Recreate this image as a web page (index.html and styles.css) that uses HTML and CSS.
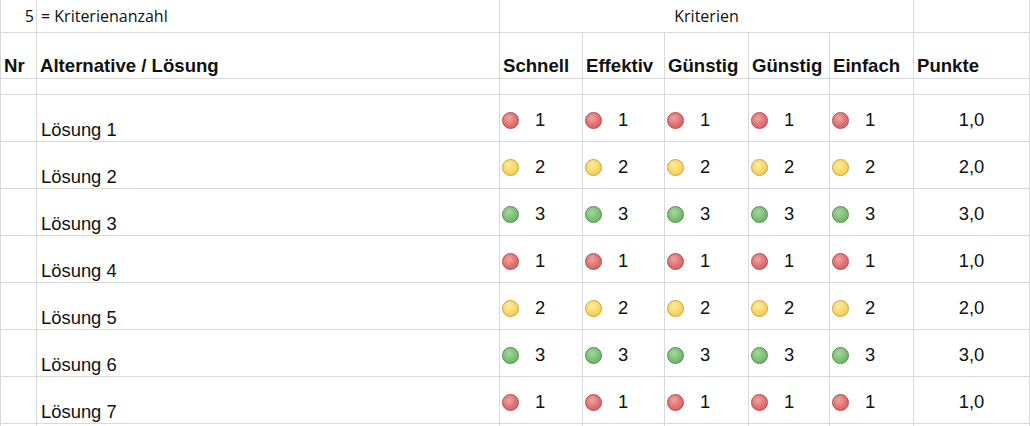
FILE: index.html
```html
<!DOCTYPE html>
<html lang="de">
<head>
<meta charset="utf-8">
<title>Kriterien</title>
<link rel="stylesheet" href="styles.css">
</head>
<body>
<div class="sheet">
  <div class="cell top num-right">5</div>
  <div class="cell top">= Kriterienanzahl</div>
  <div class="cell top center span5">Kriterien</div>
  <div class="cell top"></div>

  <div class="cell head">Nr</div>
  <div class="cell head">Alternative / Lösung</div>
  <div class="cell head">Schnell</div>
  <div class="cell head">Effektiv</div>
  <div class="cell head">Günstig</div>
  <div class="cell head">Günstig</div>
  <div class="cell head">Einfach</div>
  <div class="cell head">Punkte</div>

  <div class="cell gap"></div><div class="cell gap"></div><div class="cell gap"></div><div class="cell gap"></div>
  <div class="cell gap"></div><div class="cell gap"></div><div class="cell gap"></div><div class="cell gap"></div>

  <div class="cell data"></div>
  <div class="cell data name">Lösung 1</div>
  <div class="cell data crit"><span class="dot red"></span><span class="val">1</span></div>
  <div class="cell data crit"><span class="dot red"></span><span class="val">1</span></div>
  <div class="cell data crit"><span class="dot red"></span><span class="val">1</span></div>
  <div class="cell data crit"><span class="dot red"></span><span class="val">1</span></div>
  <div class="cell data crit"><span class="dot red"></span><span class="val">1</span></div>
  <div class="cell data pts">1,0</div>

  <div class="cell data"></div>
  <div class="cell data name">Lösung 2</div>
  <div class="cell data crit"><span class="dot yellow"></span><span class="val">2</span></div>
  <div class="cell data crit"><span class="dot yellow"></span><span class="val">2</span></div>
  <div class="cell data crit"><span class="dot yellow"></span><span class="val">2</span></div>
  <div class="cell data crit"><span class="dot yellow"></span><span class="val">2</span></div>
  <div class="cell data crit"><span class="dot yellow"></span><span class="val">2</span></div>
  <div class="cell data pts">2,0</div>

  <div class="cell data"></div>
  <div class="cell data name">Lösung 3</div>
  <div class="cell data crit"><span class="dot green"></span><span class="val">3</span></div>
  <div class="cell data crit"><span class="dot green"></span><span class="val">3</span></div>
  <div class="cell data crit"><span class="dot green"></span><span class="val">3</span></div>
  <div class="cell data crit"><span class="dot green"></span><span class="val">3</span></div>
  <div class="cell data crit"><span class="dot green"></span><span class="val">3</span></div>
  <div class="cell data pts">3,0</div>

  <div class="cell data"></div>
  <div class="cell data name">Lösung 4</div>
  <div class="cell data crit"><span class="dot red"></span><span class="val">1</span></div>
  <div class="cell data crit"><span class="dot red"></span><span class="val">1</span></div>
  <div class="cell data crit"><span class="dot red"></span><span class="val">1</span></div>
  <div class="cell data crit"><span class="dot red"></span><span class="val">1</span></div>
  <div class="cell data crit"><span class="dot red"></span><span class="val">1</span></div>
  <div class="cell data pts">1,0</div>

  <div class="cell data"></div>
  <div class="cell data name">Lösung 5</div>
  <div class="cell data crit"><span class="dot yellow"></span><span class="val">2</span></div>
  <div class="cell data crit"><span class="dot yellow"></span><span class="val">2</span></div>
  <div class="cell data crit"><span class="dot yellow"></span><span class="val">2</span></div>
  <div class="cell data crit"><span class="dot yellow"></span><span class="val">2</span></div>
  <div class="cell data crit"><span class="dot yellow"></span><span class="val">2</span></div>
  <div class="cell data pts">2,0</div>

  <div class="cell data"></div>
  <div class="cell data name">Lösung 6</div>
  <div class="cell data crit"><span class="dot green"></span><span class="val">3</span></div>
  <div class="cell data crit"><span class="dot green"></span><span class="val">3</span></div>
  <div class="cell data crit"><span class="dot green"></span><span class="val">3</span></div>
  <div class="cell data crit"><span class="dot green"></span><span class="val">3</span></div>
  <div class="cell data crit"><span class="dot green"></span><span class="val">3</span></div>
  <div class="cell data pts">3,0</div>

  <div class="cell data"></div>
  <div class="cell data name">Lösung 7</div>
  <div class="cell data crit"><span class="dot red"></span><span class="val">1</span></div>
  <div class="cell data crit"><span class="dot red"></span><span class="val">1</span></div>
  <div class="cell data crit"><span class="dot red"></span><span class="val">1</span></div>
  <div class="cell data crit"><span class="dot red"></span><span class="val">1</span></div>
  <div class="cell data crit"><span class="dot red"></span><span class="val">1</span></div>
  <div class="cell data pts">1,0</div>

  <div class="cell data"></div><div class="cell data"></div><div class="cell data"></div><div class="cell data"></div>
  <div class="cell data"></div><div class="cell data"></div><div class="cell data"></div><div class="cell data"></div>
</div>
</body>
</html>
```

FILE: styles.css
```css
html, body {
  margin: 0;
  padding: 0;
  background: #ffffff;
  overflow: hidden;
}

body {
  width: 1030px;
  height: 426px;
  font-family: "Liberation Sans", Arial, sans-serif;
  color: #111111;
}

.sheet {
  display: grid;
  grid-template-columns: 35px 462px 82px 81px 83px 80px 83px 115px;
  grid-auto-rows: 46px;
  grid-template-rows: 32px 45px 15px;
  gap: 1px;
  padding: 0 1px;
  background: #d9d9d9;
  width: 1028px;
}

.cell {
  background: #ffffff;
  min-width: 0;
  white-space: nowrap;
  overflow: hidden;
}

.top {
  font-family: "Open Sans", "Noto Sans", sans-serif;
  font-size: 16px;
  display: flex;
  align-items: center;
  padding-left: 4px;
}

.num-right {
  justify-content: flex-end;
  padding-left: 0;
  padding-right: 2px;
}

.center {
  justify-content: center;
  padding-left: 0;
}

.span5 {
  grid-column: span 5;
}

.head {
  font-weight: bold;
  font-size: 18.6px;
  display: flex;
  align-items: flex-end;
  padding: 0 0 1px 3px;
}

.data {
  font-size: 18.4px;
}

.name {
  display: flex;
  align-items: flex-end;
  padding-left: 4px;
}

.crit {
  display: flex;
  align-items: center;
  padding: 4px 0 0 2px;
}

.pts {
  display: flex;
  align-items: center;
  justify-content: center;
  padding-top: 4px;
}

.val {
  margin-left: 16px;
}

.dot {
  width: 15px;
  height: 15px;
  border-radius: 50%;
  flex: none;
  border: 1px solid;
}

.red {
  background: radial-gradient(circle at 40% 35%, #f0a2a2 0%, #de7070 55%, #cc5a5a 100%);
  border-color: #b44b4b;
}

.yellow {
  background: radial-gradient(circle at 40% 35%, #fceca0 0%, #f6d662 55%, #edc44c 100%);
  border-color: #cfa035;
}

.green {
  background: radial-gradient(circle at 40% 35%, #a3d89e 0%, #7abd74 55%, #64aa5f 100%);
  border-color: #4d8f49;
}
```
